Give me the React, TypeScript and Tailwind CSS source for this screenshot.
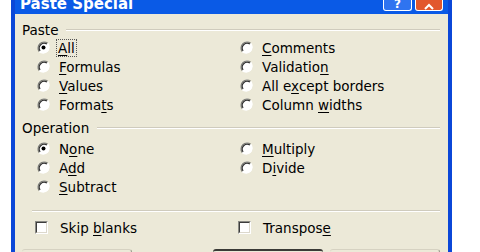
import type { ReactNode } from "react";

// Classic 3D radio button, as drawn inside the XP Paste Special dialog
function Radio({ checked = false }: { checked?: boolean }) {
  return (
    <svg width="13" height="13" viewBox="0 0 13 13" className="shrink-0">
      <circle cx="6.5" cy="6.5" r="6" fill="#ffffff" />
      <path d="M10.7 2.3 A6 6 0 0 0 2.3 10.7" fill="none" stroke="#808078" strokeWidth="1.4" />
      <path d="M9.9 3.1 A4.9 4.9 0 0 0 3.1 9.9" fill="none" stroke="#303030" strokeWidth="1.2" />
      <path d="M2.3 10.7 A6 6 0 0 0 10.7 2.3" fill="none" stroke="#ffffff" strokeWidth="1.2" />
      {checked && <circle cx="6.5" cy="6.5" r="2" fill="#000000" />}
    </svg>
  );
}

function Checkbox() {
  return (
    <div className="h-[13px] w-[13px] shrink-0 border-t border-l border-[#8a8a84] border-r-white border-b-white border-r border-b">
      <div className="h-full w-full border-t border-l border-[#3c3c3c] border-r border-b border-r-[#dcd8cc] border-b-[#dcd8cc] bg-white" />
    </div>
  );
}

function Key({ children }: { children: ReactNode }) {
  return <span className="underline underline-offset-[2px] decoration-1">{children}</span>;
}

function Option({ label, checked, focus }: { label: ReactNode; checked?: boolean; focus?: boolean }) {
  return (
    <div className="flex h-[19px] items-center">
      <Radio checked={checked} />
      <span className={focus ? "ml-[7px] px-[1px] outline-1 outline-dotted outline-[#555]" : "ml-[9px]"}>
        {label}
      </span>
    </div>
  );
}

function GroupHeader({ title }: { title: string }) {
  return (
    <div className="flex h-4 items-center pl-[7px] pr-[8px]">
      <span>{title}</span>
      <div className="ml-2 h-0 flex-1 border-t border-b border-t-[#cfcbbd] border-b-white" />
    </div>
  );
}

export default function App() {
  return (
    <div className="relative h-[252px] w-[480px] overflow-hidden bg-white text-[13.5px] leading-4 text-black [font-family:'DejaVu_Sans',Verdana,sans-serif]">
      <div className="ml-[11px] flex h-full w-[441px] flex-col border-x-4 border-x-[#0b47d8]">
        {/* Title bar, cut at the top of the picture */}
        <div className="flex h-[14px] shrink-0 items-start overflow-hidden bg-[#0a5ae6] pr-[5px]">
          <span className="-mt-[3px] ml-[5px] text-[15px] font-bold leading-[15px] text-white">Paste Special</span>
          <div className="ml-auto flex gap-[3px]">
            <div className="flex h-[11px] w-[29px] items-end justify-center rounded-b-[3px] border border-t-0 border-white bg-[#2f74f0] text-[12px] font-bold leading-[11px] text-white">
              ?
            </div>
            <div className="flex h-[11px] w-[28px] items-end justify-center rounded-b-[3px] border border-t-0 border-white bg-[#e2572e]">
              <svg width="12" height="8" viewBox="0 0 12 8">
                <path d="M2 7 L6 3 L10 7" fill="none" stroke="#ffffff" strokeWidth="2" />
              </svg>
            </div>
          </div>
        </div>

        {/* Dialog body */}
        <div className="flex flex-1 flex-col bg-[#ece9d8] pt-[8px]">
          <GroupHeader title="Paste" />
          <div className="grid grid-cols-[203px_1fr] pl-[22px]">
            <div className="flex flex-col">
              <Option checked focus label={<><Key>A</Key>ll</>} />
              <Option label={<><Key>F</Key>ormulas</>} />
              <Option label={<><Key>V</Key>alues</>} />
              <Option label={<>Forma<Key>t</Key>s</>} />
            </div>
            <div className="flex flex-col">
              <Option label={<><Key>C</Key>omments</>} />
              <Option label={<>Validatio<Key>n</Key></>} />
              <Option label={<>All e<Key>x</Key>cept borders</>} />
              <Option label={<>Column <Key>w</Key>idths</>} />
            </div>
          </div>

          <div className="mt-[6px]">
            <GroupHeader title="Operation" />
          </div>
          <div className="mt-[3px] grid grid-cols-[203px_1fr] pl-[22px]">
            <div className="flex flex-col">
              <Option checked label={<>N<Key>o</Key>ne</>} />
              <Option label={<>A<Key>d</Key>d</>} />
              <Option label={<><Key>S</Key>ubtract</>} />
            </div>
            <div className="flex flex-col">
              <Option label={<><Key>M</Key>ultiply</>} />
              <Option label={<>D<Key>i</Key>vide</>} />
            </div>
          </div>

          <div className="mx-[8px] mt-[14px] ml-[17px] h-0 border-t border-b border-t-[#cfcbbd] border-b-white" />

          <div className="mt-[6px] grid h-[19px] grid-cols-[203px_1fr] items-center pl-[20px]">
            <div className="flex items-center">
              <Checkbox />
              <span className="ml-[12px]">Skip <Key>b</Key>lanks</span>
            </div>
            <div className="flex items-center">
              <Checkbox />
              <span className="ml-[12px]">Transpos<Key>e</Key></span>
            </div>
          </div>

          {/* Tops of the command buttons, cut by the bottom edge */}
          <div className="mt-[12px] flex h-[23px] pl-[7px]">
            <div className="h-full w-[110px] rounded-t-[3px] border-t border-r border-[#d6d2c2] border-r-[#9c9a8e]" />
            <div className="ml-[81px] h-full w-[110px] rounded-t-[3px] border-t-2 border-[#3a3a36]" />
            <div className="ml-[7px] h-full w-[110px] rounded-t-[3px] border-t border-r border-[#d6d2c2] border-r-[#9c9a8e]" />
          </div>
        </div>
      </div>
    </div>
  );
}
